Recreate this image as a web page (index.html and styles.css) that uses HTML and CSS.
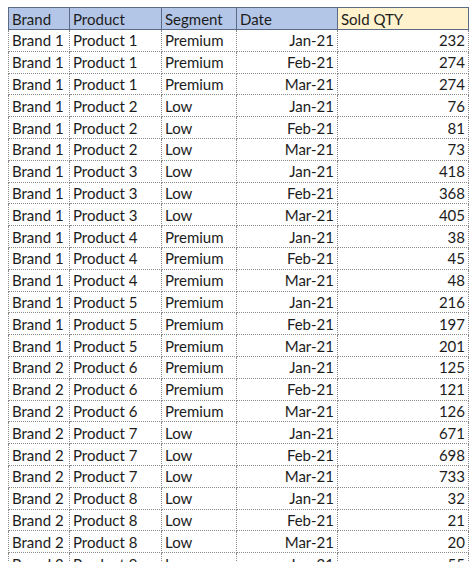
FILE: index.html
```html
<!DOCTYPE html>
<html>
<head>
<meta charset="utf-8">
<link rel="stylesheet" href="styles.css">
</head>
<body>
<div class="sheet">
<table class="grid">
<colgroup><col class="c1"><col class="c2"><col class="c3"><col class="c4"><col class="c5"></colgroup>
<thead>
<tr><th>Brand</th><th>Product</th><th>Segment</th><th>Date</th><th class="qty">Sold QTY</th></tr>
</thead>
<tbody>
<tr><td>Brand 1</td><td>Product 1</td><td>Premium</td><td class="r">Jan-21</td><td class="r">232</td></tr>
<tr><td>Brand 1</td><td>Product 1</td><td>Premium</td><td class="r">Feb-21</td><td class="r">274</td></tr>
<tr><td>Brand 1</td><td>Product 1</td><td>Premium</td><td class="r">Mar-21</td><td class="r">274</td></tr>
<tr><td>Brand 1</td><td>Product 2</td><td>Low</td><td class="r">Jan-21</td><td class="r">76</td></tr>
<tr><td>Brand 1</td><td>Product 2</td><td>Low</td><td class="r">Feb-21</td><td class="r">81</td></tr>
<tr><td>Brand 1</td><td>Product 2</td><td>Low</td><td class="r">Mar-21</td><td class="r">73</td></tr>
<tr><td>Brand 1</td><td>Product 3</td><td>Low</td><td class="r">Jan-21</td><td class="r">418</td></tr>
<tr><td>Brand 1</td><td>Product 3</td><td>Low</td><td class="r">Feb-21</td><td class="r">368</td></tr>
<tr><td>Brand 1</td><td>Product 3</td><td>Low</td><td class="r">Mar-21</td><td class="r">405</td></tr>
<tr><td>Brand 1</td><td>Product 4</td><td>Premium</td><td class="r">Jan-21</td><td class="r">38</td></tr>
<tr><td>Brand 1</td><td>Product 4</td><td>Premium</td><td class="r">Feb-21</td><td class="r">45</td></tr>
<tr><td>Brand 1</td><td>Product 4</td><td>Premium</td><td class="r">Mar-21</td><td class="r">48</td></tr>
<tr><td>Brand 1</td><td>Product 5</td><td>Premium</td><td class="r">Jan-21</td><td class="r">216</td></tr>
<tr><td>Brand 1</td><td>Product 5</td><td>Premium</td><td class="r">Feb-21</td><td class="r">197</td></tr>
<tr><td>Brand 1</td><td>Product 5</td><td>Premium</td><td class="r">Mar-21</td><td class="r">201</td></tr>
<tr><td>Brand 2</td><td>Product 6</td><td>Premium</td><td class="r">Jan-21</td><td class="r">125</td></tr>
<tr><td>Brand 2</td><td>Product 6</td><td>Premium</td><td class="r">Feb-21</td><td class="r">121</td></tr>
<tr><td>Brand 2</td><td>Product 6</td><td>Premium</td><td class="r">Mar-21</td><td class="r">126</td></tr>
<tr><td>Brand 2</td><td>Product 7</td><td>Low</td><td class="r">Jan-21</td><td class="r">671</td></tr>
<tr><td>Brand 2</td><td>Product 7</td><td>Low</td><td class="r">Feb-21</td><td class="r">698</td></tr>
<tr><td>Brand 2</td><td>Product 7</td><td>Low</td><td class="r">Mar-21</td><td class="r">733</td></tr>
<tr><td>Brand 2</td><td>Product 8</td><td>Low</td><td class="r">Jan-21</td><td class="r">32</td></tr>
<tr><td>Brand 2</td><td>Product 8</td><td>Low</td><td class="r">Feb-21</td><td class="r">21</td></tr>
<tr><td>Brand 2</td><td>Product 8</td><td>Low</td><td class="r">Mar-21</td><td class="r">20</td></tr>
<tr><td>Brand 3</td><td>Product 9</td><td>Low</td><td class="r">Jan-21</td><td class="r">55</td></tr>
</tbody>
</table>
</div>
</body>
</html>
```
FILE: styles.css
```css
html, body {
  margin: 0;
  padding: 0;
  background: #ffffff;
  overflow: hidden;
}
.sheet {
  padding: 7px 0 0 8px;
  height: 555px;
  overflow: hidden;
}
.grid {
  border-collapse: collapse;
  table-layout: fixed;
  width: 460px;
  font-family: Lato, "Open Sans", sans-serif;
  font-size: 15px;
  color: #1c1c1c;
}
.c1 { width: 61px; }
.c2 { width: 92px; }
.c3 { width: 75px; }
.c4 { width: 101px; }
.c5 { width: 131px; }
th, td {
  padding: 0 3px 0 3px;
  height: 21.8px;
  line-height: 20px;
  white-space: nowrap;
  overflow: hidden;
  box-sizing: border-box;
}
th {
  background: #b4c6e7;
  font-weight: normal;
  text-align: left;
  border: 1px solid #5b6b86;
  height: 22px;
}
th.qty {
  background: #fff2cc;
}
td {
  border-left: 1px dotted #8a8a8a;
  border-right: 1px dotted #8a8a8a;
  border-bottom: 1px dotted #8a8a8a;
}
td.r {
  text-align: right;
}
```
